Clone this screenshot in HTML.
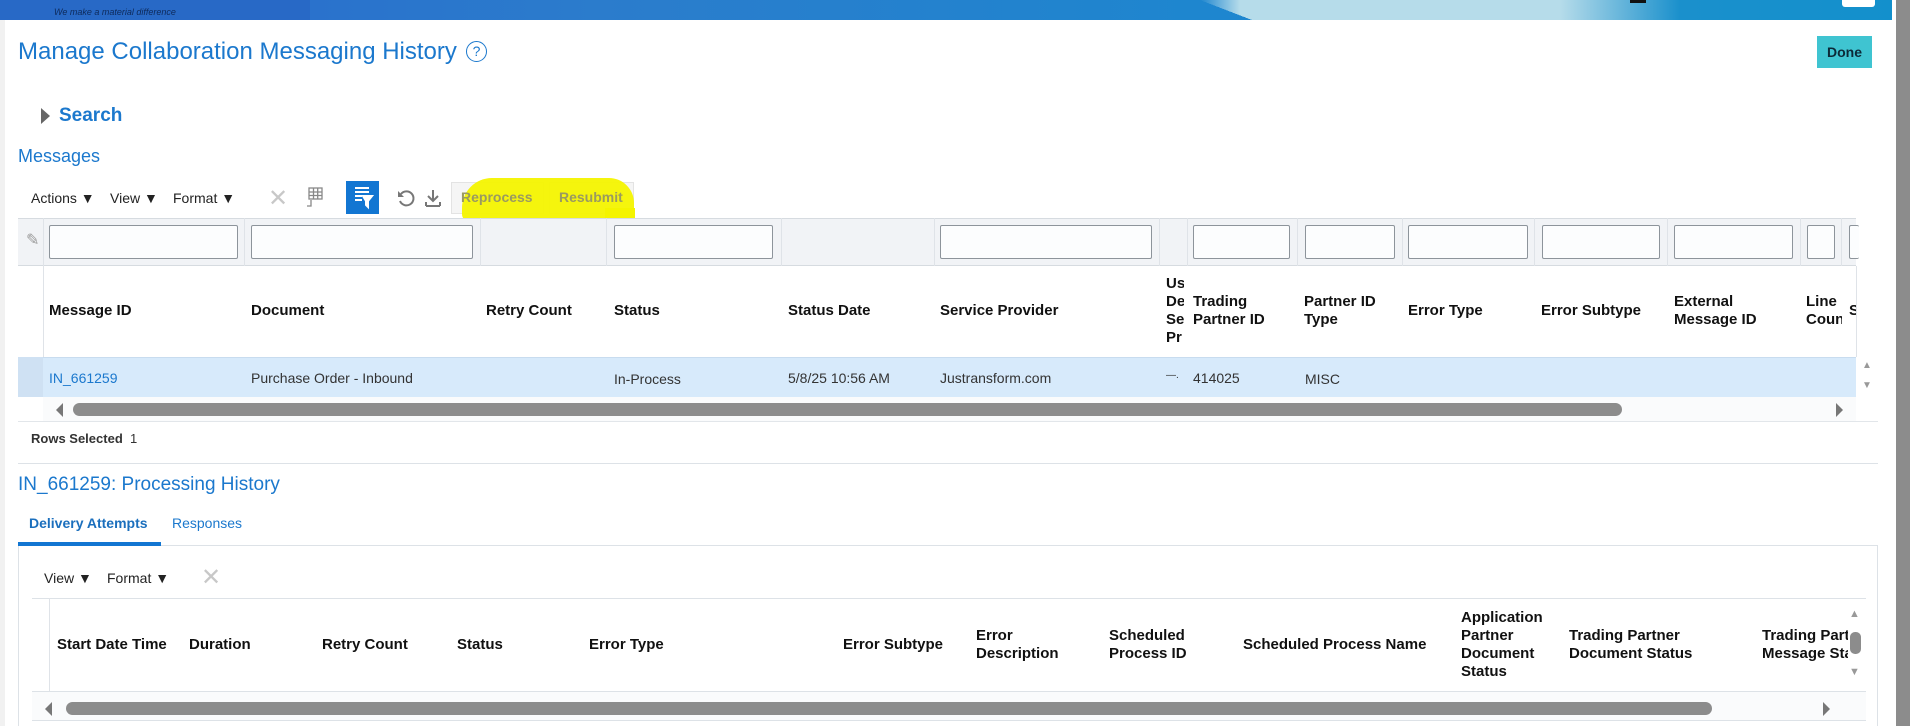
<!DOCTYPE html>
<html><head><meta charset="utf-8"><style>
*{margin:0;padding:0;box-sizing:border-box}
body{width:1915px;height:726px;overflow:hidden;background:#fff;font-family:"Liberation Sans",sans-serif;position:relative;color:#000}
.a{position:absolute;white-space:nowrap}
.h{font-weight:bold;font-size:15px;line-height:18px;color:#111}
.d{font-size:14px;color:#333}
.inp{position:absolute;top:225px;height:34px;border:1px solid #8d949b;border-radius:2px;background:#fcfdfe}
.vl{position:absolute;width:1px;background:#dfe3e8}
.tb{font-size:14px;color:#222}
</style></head><body>
<!-- banner -->
<div class="a" style="left:0;top:0;width:1892px;height:20px;background:linear-gradient(90deg,#2868c4 0,#2a72cc 310px,#2b7ccc 600px,#1e86cf 1200px,#b6dcea 1240px,#b6dcea 1560px,#1a90cc 1680px,#1390cc 1892px)"></div>
<div class="a" style="left:0;top:0;width:310px;height:20px;background:#2869c6"></div>
<div class="a" style="left:1200px;top:0;width:52px;height:20px;background:linear-gradient(to top right,#1e86cf 50%,transparent 50%)"></div>
<div class="a" style="left:54px;top:7px;font-size:9px;font-style:italic;color:#0e2a5a">We make a material difference</div>
<div class="a" style="left:1630px;top:0;width:16px;height:3px;background:#111"></div>
<div class="a" style="left:1842px;top:0;width:33px;height:7px;background:#fff;border-radius:0 0 3px 3px"></div>
<div class="a" style="left:1896px;top:0;width:14px;height:726px;background:#8c8c8c"></div>
<div class="a" style="left:0;top:20px;width:5px;height:706px;background:#f1f1f1"></div>

<div class="a" style="left:18px;top:38px;font-size:24px;color:#1b78cd">Manage Collaboration Messaging History</div>
<div class="a" style="left:466px;top:41px;width:21px;height:21px;border:1.5px solid #1b78cd;border-radius:50%;color:#1b78cd;font-size:14px;text-align:center;line-height:18px">?</div>
<div class="a" style="left:1817px;top:36px;width:55px;height:32px;background:#3fc4d1;font-size:14px;font-weight:bold;text-align:center;line-height:32px;color:#0c2a38">Done</div>

<div class="a" style="left:41px;top:108px;width:0;height:0;border-left:9px solid #666;border-top:8px solid transparent;border-bottom:8px solid transparent"></div>
<div class="a" style="left:59px;top:105px;font-size:19px;font-weight:bold;color:#1b78cd">Search</div>
<div class="a" style="left:18px;top:146px;font-size:18px;color:#1b78cd">Messages</div>

<!-- toolbar -->
<div class="a tb" style="left:31px;top:190px">Actions ▼</div>
<div class="a tb" style="left:110px;top:190px">View ▼</div>
<div class="a tb" style="left:173px;top:190px">Format ▼</div>
<div class="a" style="left:268px;top:184px;font-size:24px;color:#c8c8c8">✕</div>
<svg class="a" style="left:305px;top:186px" width="20" height="22"><g stroke="#888" fill="none" stroke-width="1.3"><rect x="4" y="2" width="13" height="11"/><path d="M4 6h13M4 9.5h13M8.5 2v11M12.7 2v11M2 20h4v-6"/></g></svg>
<div class="a" style="left:346px;top:181px;width:33px;height:33px;background:#1276d2"></div>
<svg class="a" style="left:352px;top:186px" width="22" height="24"><g fill="none" stroke="#fff" stroke-width="2"><path d="M3 2h14M3 6h14M3 10h7M3 14h7"/><path d="M11 10h9l-4 5v6l-2-2v-4z" fill="#fff"/></g></svg>
<svg class="a" style="left:396px;top:188px" width="20" height="20"><path d="M5 6a7 7 0 1 1 -1 7" fill="none" stroke="#777" stroke-width="2"/><path d="M2 3v6h6z" fill="#777"/></svg>
<svg class="a" style="left:424px;top:188px" width="18" height="20"><path d="M9 2v10M4 8l5 5 5-5M2 18h14M2 14v4M16 14v4" fill="none" stroke="#777" stroke-width="2"/></svg>
<div class="a" style="left:451px;top:182px;width:93px;height:32px;border:1px solid #e3e3e3;background:#f5f5f5"></div>
<div class="a" style="left:549px;top:182px;width:85px;height:32px;border:1px solid #e3e3e3;background:#f5f5f5"></div>
<div class="a" style="left:462px;top:178px;width:172px;height:44px;background:#f4f400;border-radius:30px 25px 8px 8px;opacity:.95"></div>
<div class="a" style="left:605px;top:208px;width:30px;height:15px;background:#f4f400"></div>
<div class="a" style="left:461px;top:189px;font-size:14px;font-weight:bold;color:#9a9a60">Reprocess</div>
<div class="a" style="left:559px;top:189px;font-size:14px;font-weight:bold;color:#9a9a60">Resubmit</div>

<!-- top table -->
<div class="a" style="left:18px;top:218px;width:1838px;height:48px;background:#f1f3f6;border-top:1px solid #d6dbe0;border-bottom:1px solid #d6dbe0"></div>
<div class="a" style="left:26px;top:230px;font-size:16px;color:#999">✎</div>
<div class="inp" style="left:49px;width:189px"></div>
<div class="inp" style="left:251px;width:222px"></div>
<div class="inp" style="left:614px;width:159px"></div>
<div class="inp" style="left:940px;width:212px"></div>
<div class="inp" style="left:1193px;width:97px"></div>
<div class="inp" style="left:1305px;width:90px"></div>
<div class="inp" style="left:1408px;width:120px"></div>
<div class="inp" style="left:1542px;width:118px"></div>
<div class="inp" style="left:1674px;width:119px"></div>
<div class="inp" style="left:1807px;width:28px"></div>
<div class="inp" style="left:1849px;width:10px;border-right:none"></div>
<div class="vl" style="left:43px;top:218px;height:179px"></div>
<div class="vl" style="left:244px;top:218px;height:48px"></div>
<div class="vl" style="left:480px;top:218px;height:48px"></div>
<div class="vl" style="left:606px;top:218px;height:48px"></div>
<div class="vl" style="left:781px;top:218px;height:48px"></div>
<div class="vl" style="left:934px;top:218px;height:48px"></div>
<div class="vl" style="left:1159px;top:218px;height:48px"></div>
<div class="vl" style="left:1187px;top:218px;height:48px"></div>
<div class="vl" style="left:1297px;top:218px;height:48px"></div>
<div class="vl" style="left:1402px;top:218px;height:48px"></div>
<div class="vl" style="left:1534px;top:218px;height:48px"></div>
<div class="vl" style="left:1667px;top:218px;height:48px"></div>
<div class="vl" style="left:1800px;top:218px;height:48px"></div>
<div class="vl" style="left:1841px;top:218px;height:48px"></div>
<div class="vl" style="left:1856px;top:266px;height:91px"></div>

<div class="a h" style="left:49px;top:302px">Message ID</div>
<div class="a h" style="left:251px;top:302px">Document</div>
<div class="a h" style="left:486px;top:302px">Retry Count</div>
<div class="a h" style="left:614px;top:302px">Status</div>
<div class="a h" style="left:788px;top:302px">Status Date</div>
<div class="a h" style="left:940px;top:302px">Service Provider</div>
<div class="a h" style="left:1166px;top:275px;width:18px;overflow:hidden;line-height:18px">Us<br>De<br>Se<br>Pr</div>
<div class="a h" style="left:1193px;top:293px">Trading<br>Partner ID</div>
<div class="a h" style="left:1304px;top:293px">Partner ID<br>Type</div>
<div class="a h" style="left:1408px;top:302px">Error Type</div>
<div class="a h" style="left:1541px;top:302px">Error Subtype</div>
<div class="a h" style="left:1674px;top:293px">External<br>Message ID</div>
<div class="a h" style="left:1806px;top:293px;width:36px;overflow:hidden">Line<br>Count</div>
<div class="a h" style="left:1849px;top:302px;width:7px;overflow:hidden">S</div>

<div class="a" style="left:18px;top:357px;width:1838px;height:40px;background:#d7eafb;border-top:1px solid #c8dcef"></div>
<div class="a" style="left:18px;top:357px;width:25px;height:40px;background:#cfe1f3"></div>
<div class="a d" style="left:49px;top:370px;color:#1b78cd">IN_661259</div>
<div class="a d" style="left:251px;top:370px">Purchase Order - Inbound</div>
<div class="a d" style="left:614px;top:371px">In-Process</div>
<div class="a d" style="left:788px;top:370px">5/8/25 10:56 AM</div>
<div class="a d" style="left:940px;top:370px">Justransform.com</div>
<div class="a d" style="left:1166px;top:370px;font-size:10px">—.</div>
<div class="a d" style="left:1193px;top:370px">414025</div>
<div class="a d" style="left:1305px;top:371px">MISC</div>
<div class="a" style="left:1862px;top:360px;font-size:10px;color:#999">▲</div>
<div class="a" style="left:1862px;top:380px;font-size:10px;color:#999">▼</div>
<div class="a" style="left:43px;top:397px;width:1813px;height:24px;background:#fafbfc"></div>
<div class="a" style="left:56px;top:403px;width:0;height:0;border-right:7px solid #777;border-top:7px solid transparent;border-bottom:7px solid transparent"></div>
<div class="a" style="left:73px;top:403px;width:1549px;height:13px;background:#8c8c8c;border-radius:7px"></div>
<div class="a" style="left:1836px;top:403px;width:0;height:0;border-left:7px solid #777;border-top:7px solid transparent;border-bottom:7px solid transparent"></div>
<div class="a" style="left:18px;top:421px;width:1860px;height:1px;background:#e2e6ea"></div>

<div class="a" style="left:31px;top:431px;font-size:13px;font-weight:bold;color:#333">Rows Selected&nbsp; <span style="font-weight:normal">1</span></div>
<div class="a" style="left:18px;top:463px;width:1860px;height:1px;background:#dde2e7"></div>
<div class="a" style="left:18px;top:474px;font-size:19px;color:#1b78cd">IN_661259: Processing History</div>
<div class="a" style="left:29px;top:515px;font-size:14px;font-weight:bold;color:#1b6fbd">Delivery Attempts</div>
<div class="a" style="left:172px;top:515px;font-size:14px;color:#1b78cd">Responses</div>
<div class="a" style="left:18px;top:545px;width:1860px;height:181px;border:1px solid #dde2e7;border-bottom:none"></div>
<div class="a" style="left:18px;top:542px;width:143px;height:4px;background:#1276d2"></div>

<div class="a tb" style="left:44px;top:570px">View ▼</div>
<div class="a tb" style="left:107px;top:570px">Format ▼</div>
<div class="a" style="left:201px;top:563px;font-size:24px;color:#c8c8c8">✕</div>
<div class="a" style="left:32px;top:598px;width:1834px;height:1px;background:#dde2e7"></div>
<div class="vl" style="left:49px;top:598px;height:94px"></div>
<div class="a" style="left:32px;top:691px;width:1834px;height:1px;background:#dde2e7"></div>

<div class="a h" style="left:57px;top:636px">Start Date Time</div>
<div class="a h" style="left:189px;top:636px">Duration</div>
<div class="a h" style="left:322px;top:636px">Retry Count</div>
<div class="a h" style="left:457px;top:636px">Status</div>
<div class="a h" style="left:589px;top:636px">Error Type</div>
<div class="a h" style="left:843px;top:636px">Error Subtype</div>
<div class="a h" style="left:976px;top:627px">Error<br>Description</div>
<div class="a h" style="left:1109px;top:627px">Scheduled<br>Process ID</div>
<div class="a h" style="left:1243px;top:636px">Scheduled Process Name</div>
<div class="a h" style="left:1461px;top:609px">Application<br>Partner<br>Document<br>Status</div>
<div class="a h" style="left:1569px;top:627px">Trading Partner<br>Document Status</div>
<div class="a h" style="left:1762px;top:627px;width:86px;overflow:hidden">Trading Partner<br>Message Status</div>
<div class="a" style="left:1849px;top:608px;font-size:11px;color:#999">▲</div>
<div class="a" style="left:1850px;top:632px;width:11px;height:22px;background:#8c8c8c;border-radius:5px"></div>
<div class="a" style="left:1849px;top:666px;font-size:11px;color:#999">▼</div>

<div class="a" style="left:32px;top:692px;width:1834px;height:28px;background:#fafbfc"></div>
<div class="a" style="left:45px;top:702px;width:0;height:0;border-right:7px solid #777;border-top:7px solid transparent;border-bottom:7px solid transparent"></div>
<div class="a" style="left:66px;top:702px;width:1646px;height:13px;background:#8c8c8c;border-radius:7px"></div>
<div class="a" style="left:1823px;top:702px;width:0;height:0;border-left:7px solid #777;border-top:7px solid transparent;border-bottom:7px solid transparent"></div>
<div class="a" style="left:32px;top:720px;width:1834px;height:1px;background:#dde2e7"></div>
</body></html>
